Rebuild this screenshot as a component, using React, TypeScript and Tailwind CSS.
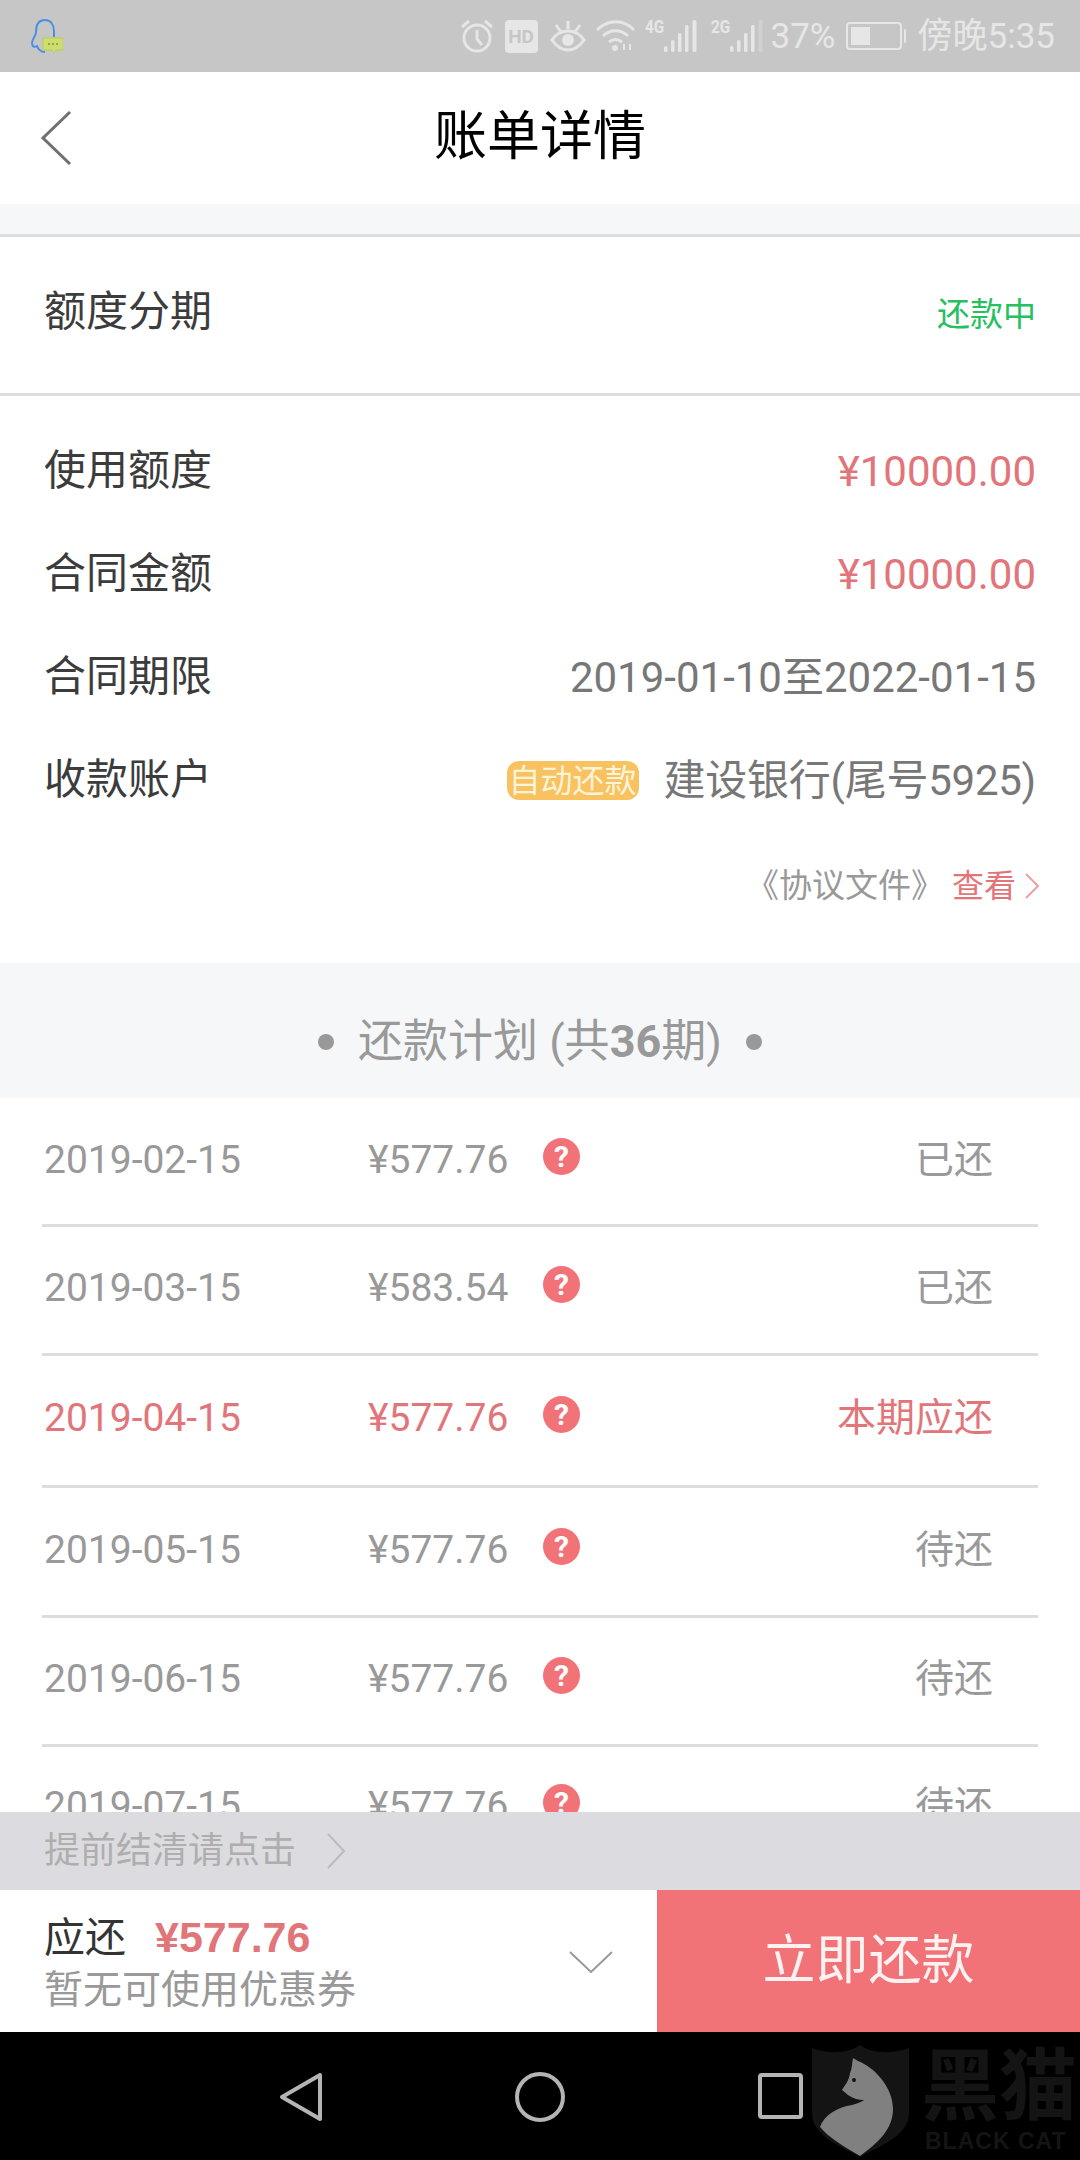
const FONT = 'font-["Roboto","Noto_Sans_CJK_SC",sans-serif]'

const PLAN = [
  { date: '2019-02-15', amount: '¥577.76', status: '已还', height: 'h-[129px]', pt: 'pt-[40px]' },
  { date: '2019-03-15', amount: '¥583.54', status: '已还', height: 'h-[129px]', pt: 'pt-[39px]' },
  { date: '2019-04-15', amount: '¥577.76', status: '本期应还', height: 'h-[132px]', pt: 'pt-[40px]', active: true },
  { date: '2019-05-15', amount: '¥577.76', status: '待还', height: 'h-[130px]', pt: 'pt-[40px]' },
  { date: '2019-06-15', amount: '¥577.76', status: '待还', height: 'h-[129px]', pt: 'pt-[39px]' },
  { date: '2019-07-15', amount: '¥577.76', status: '待还', height: 'h-[129px]', pt: 'pt-[37px]' },
]

function Signal({ label, faded }: { label: string; faded?: boolean }) {
  return (
    <div className="relative h-[32px] w-[53px]">
      <span className="absolute left-0 top-[-2px] origin-left scale-x-[0.85] text-[18px] font-bold leading-[18px] text-[#e6e6e6]">{label}</span>
      <svg viewBox="0 0 53 32" className="absolute inset-0 h-[32px] w-[53px]" fill="#e6e6e6">
        <rect x="19" y="26" width="3.5" height="6" rx="1.5" />
        <rect x="26" y="20" width="3.5" height="12" rx="1.5" />
        <rect x="33" y="13" width="3.5" height="19" rx="1.5" />
        <rect x="40" y="5" width="3.5" height="27" rx="1.5" />
        <rect x="47.5" y="0" width="4" height="32" rx="1.5" opacity={faded ? 0.35 : 1} />
      </svg>
    </div>
  )
}

function StatusBar() {
  return (
    <div className="flex h-[72px] shrink-0 items-center bg-[#c6c6c6] pl-[31px] pr-[25px]">
      <svg viewBox="0 0 32 34" className="h-[34px] w-[32px]" fill="none">
        <path d="M14 1C7 1 5 7 5 13c0 4-4 7-4 11 0 3 2 5 5 3 1 4 5 6 8 6" stroke="#4a90e2" strokeWidth="2" />
        <path d="M14 1c6 0 9 5 9 11v6" stroke="#4a90e2" strokeWidth="2" />
        <path d="M12 19h20v12h-7l-2 3-2-3h-9z" fill="#cfdc6e" stroke="#b9d04e" />
        <circle cx="18" cy="25" r="1" fill="#7f9a30" />
        <circle cx="22" cy="25" r="1" fill="#7f9a30" />
        <circle cx="26" cy="25" r="1" fill="#7f9a30" />
      </svg>
      <div className="ml-auto flex items-center">
        <svg viewBox="0 0 34 34" className="h-[34px] w-[34px]" fill="none" stroke="#e6e6e6" strokeWidth="3">
          <circle cx="17" cy="19" r="13" />
          <path d="M17 11v9l5 6M2 8l7-6M32 8l-7-6" />
        </svg>
        <div className="ml-[11px] flex h-[33px] w-[33px] items-center justify-center rounded-[4px] bg-[#e6e6e6] text-[19px] font-bold leading-none text-[#c6c6c6]">HD</div>
        <svg viewBox="0 0 36 32" className="ml-[12px] h-[32px] w-[36px]" fill="none" stroke="#e6e6e6" strokeWidth="3">
          <path d="M2 20c4-6 9-9 16-9s12 3 16 9c-4 6-9 10-16 10S6 26 2 20z" />
          <circle cx="18" cy="20" r="6" fill="#e6e6e6" stroke="none" />
          <path d="M18 1v8M6 5l5 7M30 5l-5 7" />
        </svg>
        <svg viewBox="0 0 40 34" className="ml-[10px] h-[34px] w-[40px]" fill="none" stroke="#e6e6e6" strokeWidth="3">
          <path d="M1 11c11-11 27-11 37 0M7 17c7-7 18-7 25 0M13 23c4-3 9-3 13 0" />
          <circle cx="19" cy="29" r="3" fill="#e6e6e6" stroke="none" />
          <path d="M28 25v6M34 25v6" strokeWidth="2" />
        </svg>
        <div className="ml-[9px]"><Signal label="4G" /></div>
        <div className="ml-[13px]"><Signal label="2G" faded /></div>
        <span className="ml-[7px] text-[35px] leading-none text-[#e6e6e6]">37%</span>
        <div className="ml-[10px] flex h-[28px] w-[56px] items-center rounded-[4px] border-2 border-[#e6e6e6] p-[3px]">
          <div className="h-full w-[19px] bg-[#e6e6e6]" />
        </div>
        <div className="ml-[2px] h-[14px] w-[2px] rounded-r bg-[#e6e6e6]" />
        <span className="ml-[12px] text-[35px] leading-none text-[#e6e6e6]">傍晚5:35</span>
      </div>
    </div>
  )
}

function InfoRow({ label, children }: { label: string; children: React.ReactNode }) {
  return (
    <div className="flex h-[103px] items-center justify-between text-[42px] leading-none">
      <span className="mt-[-2px] text-[#3c3c3c]">{label}</span>
      {children}
    </div>
  )
}

function PlanRow({ item }: { item: (typeof PLAN)[number] }) {
  const color = item.active ? 'text-[#e2757a]' : 'text-[#999999]'
  return (
    <div className={`flex shrink-0 items-start border-b-[3px] border-[#dddddd] pr-[45px] text-[39px] leading-[44px] ${item.height} ${item.pt} ${color}`}>
      <span className="ml-[2px] w-[324px]">{item.date}</span>
      <span className="w-[175px]">{item.amount}</span>
      <span className="mt-0 flex h-[37px] w-[37px] items-center justify-center rounded-full bg-[#f27377] text-[30px] font-bold leading-none text-white">?</span>
      <span className="ml-auto">{item.status}</span>
    </div>
  )
}

function NavBar() {
  return (
    <div className="relative flex h-[128px] shrink-0 items-start bg-black pt-[40px]">
      <svg viewBox="0 0 44 50" className="ml-[279px] h-[50px] w-[44px]" fill="none" stroke="#b4b4b4" strokeWidth="4" strokeLinejoin="round">
        <path d="M41 3v44L3 25z" />
      </svg>
      <svg viewBox="0 0 50 50" className="ml-[192px] h-[50px] w-[50px]" fill="none" stroke="#b4b4b4" strokeWidth="4">
        <circle cx="25" cy="25" r="23" />
      </svg>
      <div className="ml-[193px] mt-[1px] h-[46px] w-[45px] rounded-[4px] border-[4px] border-[#b4b4b4]" />
      {/* watermark */}
      <div className="absolute left-[812px] top-[13px] flex">
        <svg viewBox="0 0 97 112" className="h-[112px] w-[97px]">
          <path d="M0 3C14 9 36 9 48 0 60 9 82 9 97 3V68C97 90 70 100 48 112 26 100 0 90 0 68Z" fill="#141414" />
          <path d="M41 13L46 16C62 22 81 42 81 64 81 84 66 98 48 111 34 103 16 92 8 82 12 70 26 62 40 60 46 58 50 57 52 55 46 55 40 53 36 50L30 45C33 40 37 36 38 28 40 24 40 18 41 13Z" fill="#808080" />
          <circle cx="42" cy="35" r="2" fill="#141414" />
        </svg>
        <div className="ml-[12px] flex flex-col">
          <span className="mt-[4px] text-[78px] font-bold leading-[78px] text-[#141414]">黑猫</span>
          <span className="ml-[4px] mt-[2px] font-['Liberation_Sans'] text-[23px] font-bold leading-[24px] tracking-[1px] text-[#141414]">BLACK CAT</span>
        </div>
      </div>
    </div>
  )
}

export default function App() {
  return (
    <div className={`flex h-[2160px] w-[1080px] flex-col overflow-hidden bg-white ${FONT}`}>
      <StatusBar />

      <div className="relative flex h-[132px] shrink-0 items-center justify-center bg-white pb-[1px]">
        <svg viewBox="0 0 32 54" className="absolute left-[40px] top-[39px] h-[54px] w-[32px]" fill="none" stroke="#707070" strokeWidth="3">
          <path d="M30 1L3 27l27 26" />
        </svg>
        <span className="text-[53px] leading-none text-black">账单详情</span>
      </div>

      <div className="h-[30px] shrink-0 bg-[#f6f7f9]" />

      <div className="flex h-[162px] shrink-0 items-center justify-between border-y-[3px] border-[#dddddd] px-[44px] pb-[6px]">
        <span className="text-[42px] leading-none text-[#3c3c3c]">额度分期</span>
        <span className="mt-[4px] text-[33px] leading-none text-[#27c060]">还款中</span>
      </div>

      <div className="h-[567px] shrink-0 px-[44px] pt-[24px]">
        <InfoRow label="使用额度"><span className="text-[#e2757a]">¥10000.00</span></InfoRow>
        <InfoRow label="合同金额"><span className="text-[#e2757a]">¥10000.00</span></InfoRow>
        <InfoRow label="合同期限"><span className="text-[#777777]">2019-01-10至2022-01-15</span></InfoRow>
        <InfoRow label="收款账户">
          <div className="flex items-center">
            <span className="flex h-[39px] w-[132px] items-center justify-center rounded-[12px] bg-[#f7c25f] text-[32px] leading-none text-[#fdf3d8]">自动还款</span>
            <span className="ml-[25px] tracking-[-0.25px] text-[#777777]">建设银行(尾号5925)</span>
          </div>
        </InfoRow>
        <div className="mr-[-4px] mt-[37px] flex items-center justify-end text-[32px] leading-none">
          <span className="text-[33px] text-[#999999]">《协议文件》</span>
          <span className="ml-[8px] text-[#e2757a]">查看</span>
          <svg viewBox="0 0 16 26" className="ml-[8px] h-[26px] w-[16px]" fill="none" stroke="#eda0a3" strokeWidth="2">
            <path d="M2 1l12 12L2 25" />
          </svg>
        </div>
      </div>

      <div className="flex h-[135px] shrink-0 items-center justify-center bg-[#f6f7f9] pt-[22px] text-[45px] leading-none text-[#999999]">
        <span className="h-[16px] w-[16px] rounded-full bg-[#999999]" />
        <span className="mx-[24px]">还款计划 (共<b>36</b>期)</span>
        <span className="h-[16px] w-[16px] rounded-full bg-[#999999]" />
      </div>

      <div className="flex min-h-0 flex-1 flex-col overflow-hidden px-[42px]">
        {PLAN.map((item) => (
          <PlanRow key={item.date} item={item} />
        ))}
      </div>

      <div className="flex h-[78px] shrink-0 items-center bg-[#dcdce0] pl-[44px]">
        <span className="text-[36px] leading-none text-[#aeaeae]">提前结清请点击</span>
        <svg viewBox="0 0 20 36" className="ml-[30px] h-[36px] w-[20px]" fill="none" stroke="#bbbbbb" strokeWidth="2">
          <path d="M2 1l16 17L2 35" />
        </svg>
      </div>

      <div className="flex h-[142px] shrink-0 bg-white">
        <div className="flex w-[657px] items-center pl-[44px] pr-[44px]">
          <div className="flex-1 pt-[5px]">
            <div className="flex items-baseline">
              <span className="text-[41px] leading-[46px] text-[#333333]">应还</span>
              <span className="ml-[29px] font-['Liberation_Sans'] text-[43px] font-bold leading-[46px] text-[#e2757a]">¥577.76</span>
            </div>
            <div className="mt-[6px] text-[39px] leading-[46px] text-[#999999]">暂无可使用优惠券</div>
          </div>
          <svg viewBox="0 0 44 22" className="mt-[2px] h-[22px] w-[44px]" fill="none" stroke="#9a9a9a" strokeWidth="2">
            <path d="M1 1l21 20L43 1" />
          </svg>
        </div>
        <div className="flex flex-1 items-center justify-center bg-[#f27377] text-[53px] leading-none text-[#fdf1f1]">立即还款</div>
      </div>

      <NavBar />
    </div>
  )
}
